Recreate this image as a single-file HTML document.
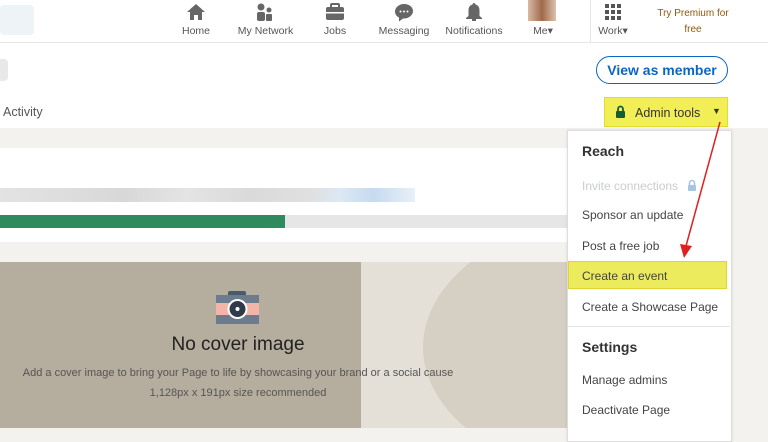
<html><head><style>
body{margin:0;width:768px;height:433px;overflow:hidden;background:#f3f2ef;font-family:"Liberation Sans",sans-serif;position:relative}
.a{position:absolute}
.nav{font-size:10.5px;color:#555;text-align:center}
.mi{font-size:12px;color:#444;left:582px}
</style></head><body>
<div class="a" style="left:0;top:0;width:768px;height:42px;background:#fff;border-bottom:1px solid #e6e6e6"></div>
<div class="a" style="left:0;top:5px;width:34px;height:30px;background:#eef3f8;border-radius:4px"></div>
<svg class="a" style="left:186px;top:3px" width="20" height="18"><path d="M10 1L1 9h3v8h4v-5h4v5h4V9h3z" fill="#666"/></svg>
<div class="a nav" style="left:176px;top:25px;width:40px">Home</div>
<svg class="a" style="left:255px;top:3px" width="20" height="18"><circle cx="6" cy="4" r="3.5" fill="#666"/><rect x="2" y="9" width="8" height="9" rx="2" fill="#666"/><circle cx="14" cy="7" r="2.5" fill="#666"/><rect x="11" y="11" width="6" height="7" rx="1" fill="#666"/></svg>
<div class="a nav" style="left:233px;top:25px;width:65px">My Network</div>
<svg class="a" style="left:325px;top:3px" width="20" height="18"><rect x="6" y="1" width="8" height="4" rx="1" fill="none" stroke="#666" stroke-width="2"/><rect x="1" y="4" width="18" height="13" rx="2" fill="#666"/><rect x="1" y="9" width="18" height="1.5" fill="#fff"/></svg>
<div class="a nav" style="left:320px;top:25px;width:30px">Jobs</div>
<svg class="a" style="left:394px;top:3px" width="20" height="20"><path d="M10 1C5 1 1 4.5 1 8.5c0 3 2 5 4 6v4l4-3h1c5 0 9-3.5 9-7.5S15 1 10 1z" fill="#666"/><circle cx="6.5" cy="8.5" r="1" fill="#fff"/><circle cx="10" cy="8.5" r="1" fill="#fff"/><circle cx="13.5" cy="8.5" r="1" fill="#fff"/></svg>
<div class="a nav" style="left:376px;top:25px;width:56px">Messaging</div>
<svg class="a" style="left:464px;top:2px" width="20" height="20"><path d="M10 1c-1 0-1.5 1-1.5 1.5C5 3.5 4.5 6 4.5 9v5L2 16v1h16v-1l-2.5-2V9c0-3-.5-5.5-4-6.5C11.5 2 11 1 10 1z" fill="#666"/><rect x="8" y="17" width="4" height="2" fill="#666"/></svg>
<div class="a nav" style="left:442px;top:25px;width:64px">Notifications</div>
<div class="a" style="left:528px;top:0;width:28px;height:21px;background:linear-gradient(90deg,#d9b9a6,#a06a4a,#dcc2b0)"></div>
<div class="a nav" style="left:528px;top:25px;width:30px">Me▾</div>
<div class="a" style="left:590px;top:0;width:1px;height:42px;background:#e6e6e6"></div>
<svg class="a" style="left:604px;top:3px" width="18" height="18"><g fill="#555"><rect x="1" y="1" width="4" height="4"/><rect x="7" y="1" width="4" height="4"/><rect x="13" y="1" width="4" height="4"/><rect x="1" y="7" width="4" height="4"/><rect x="7" y="7" width="4" height="4"/><rect x="13" y="7" width="4" height="4"/><rect x="1" y="13" width="4" height="4"/><rect x="7" y="13" width="4" height="4"/><rect x="13" y="13" width="4" height="4"/></g></svg>
<div class="a nav" style="left:592px;top:25px;width:42px">Work▾</div>
<div class="a" style="left:648px;top:6px;width:90px;font-size:10px;color:#915907;text-align:center;line-height:16px">Try Premium for<br>free</div>
<div class="a" style="left:0;top:43px;width:768px;height:85px;background:#fff"></div>
<div class="a" style="left:0;top:59px;width:8px;height:22px;background:#e8e8e8;border-radius:0 4px 4px 0"></div>
<div class="a" style="left:596px;top:56px;width:130px;height:26px;border:1.5px solid #0a66c2;border-radius:14px;color:#0a66c2;font-size:14px;font-weight:bold;text-align:center;line-height:26px">View as member</div>
<div class="a" style="left:3px;top:105px;font-size:12.5px;color:#555">Activity</div>
<div class="a" style="left:604px;top:97px;width:124px;height:30px;background:#f2ee55;border:1px solid #e0dc30;box-sizing:border-box"></div>
<svg class="a" style="left:615px;top:105px" width="11" height="14"><path d="M3 6V4a2.5 2.5 0 015 0v2" stroke="#0f5e3b" stroke-width="1.8" fill="none"/><rect x="1" y="6" width="9" height="7" rx="1" fill="#0f5e3b"/></svg>
<div class="a" style="left:635px;top:106px;font-size:12.5px;color:#333">Admin tools</div>
<div class="a" style="left:712px;top:106px;font-size:9px;color:#333">▼</div>
<div class="a" style="left:0;top:148px;width:570px;height:94px;background:#fff"></div>
<div class="a" style="left:0;top:188px;width:415px;height:14px;background:linear-gradient(90deg,#e3e3e3,#d8d8d8 30%,#e4e4e4 45%,#dadada 60%,#e0e0e0 75%,#dce8f4 82%,#c6daef 90%,#e8f0f8)"></div>
<div class="a" style="left:0;top:215px;width:285px;height:13px;background:#2f8a5e"></div>
<div class="a" style="left:285px;top:215px;width:285px;height:13px;background:#e6e6e6"></div>
<div class="a" style="left:0;top:262px;width:570px;height:166px;background:#e4e0d8;overflow:hidden"><div class="a" style="left:423px;top:-60px;width:500px;height:290px;border-radius:50%;background:#d5cfc4"></div><div class="a" style="left:0;top:0;width:361px;height:166px;background:#b5ad9d"></div></div>
<svg class="a" style="left:216px;top:291px" width="44" height="36"><rect x="12" y="0" width="18" height="6" rx="2" fill="#4b5a6a"/><rect x="0" y="4" width="43" height="9" fill="#6b7c8e"/><rect x="0" y="12" width="43" height="12" fill="#f3b5a8"/><rect x="0" y="24" width="43" height="9" fill="#6b7c8e"/><circle cx="21.5" cy="18" r="10" fill="#fff"/><circle cx="21.5" cy="18" r="8" fill="#2f3b48"/><circle cx="21.5" cy="18" r="2" fill="#fff"/></svg>
<div class="a" style="left:0;top:334px;width:476px;text-align:center;font-size:19px;color:#222">No cover image</div>
<div class="a" style="left:0;top:367px;width:476px;text-align:center;font-size:11px;color:#555">Add a cover image to bring your Page to life by showcasing your brand or a social cause</div>
<div class="a" style="left:0;top:387px;width:476px;text-align:center;font-size:11px;color:#555">1,128px x 191px size recommended</div>
<div class="a" style="left:567px;top:130px;width:163px;height:310px;background:#fff;border:1px solid #ddd;box-shadow:0 0 3px rgba(0,0,0,.1)"></div>
<div class="a" style="left:582px;top:143px;font-size:14px;font-weight:bold;color:#333">Reach</div>
<div class="a mi" style="top:179px;color:#c9ccd0">Invite connections</div>
<svg class="a" style="left:687px;top:179px" width="10" height="13"><path d="M2.5 6V4a2.5 2.5 0 015 0v2" stroke="#a8c4e4" stroke-width="1.6" fill="none"/><rect x="1" y="6" width="8" height="6" rx="1" fill="#a8c4e4"/></svg>
<div class="a mi" style="top:208px">Sponsor an update</div>
<div class="a mi" style="top:239px">Post a free job</div>
<div class="a" style="left:568px;top:261px;width:159px;height:28px;background:#eceb5d;border:1.5px solid #e0d530;box-sizing:border-box"></div>
<div class="a mi" style="top:269px">Create an event</div>
<div class="a mi" style="top:300px">Create a Showcase Page</div>
<div class="a" style="left:568px;top:326px;width:162px;height:1px;background:#e6e6e6"></div>
<div class="a" style="left:582px;top:339px;font-size:14px;font-weight:bold;color:#333">Settings</div>
<div class="a mi" style="top:373px">Manage admins</div>
<div class="a mi" style="top:403px">Deactivate Page</div>
<svg class="a" style="left:0;top:0" width="768" height="433"><line x1="720" y1="122" x2="686" y2="246" stroke="#e02020" stroke-width="1.5"/><path d="M680 244L684 258L692 246z" fill="#e02020"/></svg>
</body></html>
